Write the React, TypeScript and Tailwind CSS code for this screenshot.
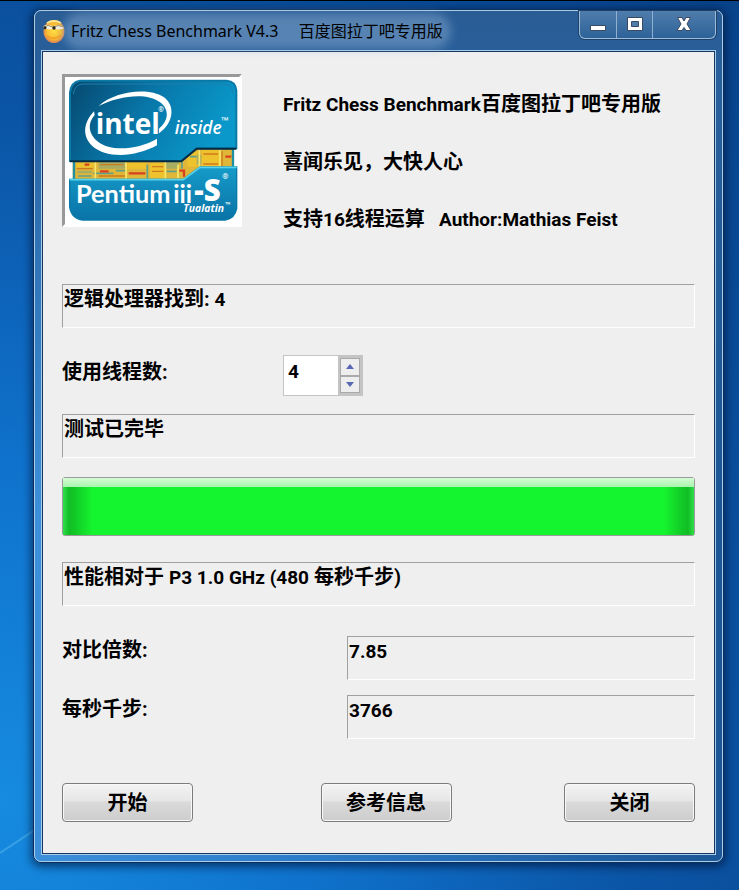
import { useState } from 'react';
import type { ReactNode } from 'react';

/** Fritz Chess Benchmark dialog on an Aero style desktop. */

const CAPTION_BUTTON =
  'flex h-full items-center justify-center border-r border-[#8fb0cf] last:border-r-0 hover:bg-white/20';

function SmileyIcon() {
  return (
    <svg viewBox="0 0 24 24" className="size-6 shrink-0" aria-hidden="true">
      <defs>
        <radialGradient id="face" cx="50%" cy="48%" r="55%">
          <stop offset="0" stopColor="#ffdf45" />
          <stop offset="0.65" stopColor="#f8b931" />
          <stop offset="1" stopColor="#d2795f" />
        </radialGradient>
      </defs>
      <ellipse cx="12" cy="12.500" rx="10.500" ry="11.500" fill="url(#face)" />
      <path d="M5 4Q12 0 19 4" stroke="#ffe98a" strokeWidth="2" fill="none" />
      <path d="M1.500 7Q6 4.500 11 7.500Q16 4.500 21.500 7.500V9.500Q16 11.500 12 9.500Q6 11.500 1.500 9z" fill="#f3efe0" />
      <path d="M1 8Q6 5 11 8Q16 5 22 8" fill="none" stroke="#8b713d" strokeWidth="0.800" />
      <circle cx="3" cy="8.800" r="1.500" fill="#222a22" />
      <circle cx="12" cy="9" r="1.700" fill="#222a22" />
      <path d="M5 17Q12 22 19 16" fill="none" stroke="#f29a25" strokeWidth="1.500" />
    </svg>
  );
}

function PentiumLogo() {
  return (
    <svg viewBox="45 37 522 441" className="block h-full w-full" role="img" aria-label="Intel inside Pentium iii-S Tualatin">
      <defs>
        <linearGradient id="top" x1="0" y1="0" x2="1" y2="0.3">
          <stop offset="0" stopColor="#06486f" />
          <stop offset="0.5" stopColor="#0876a8" />
          <stop offset="1" stopColor="#0a97c9" />
        </linearGradient>
        <linearGradient id="bottom" x1="0" y1="0" x2="0" y2="1">
          <stop offset="0" stopColor="#169bc9" />
          <stop offset="1" stopColor="#0973a6" />
        </linearGradient>
      </defs>

      {/* Processor die */}
      <path d="M68 250h482v95H68z" fill="#e0b638" />
      <path d="M80 296h52v12H80zM232 294h56v18h-56zM300 296h44v44h-44zM412 262h30v44h-30zM456 256h52v54h-52z" fill="#eec22c" />
      <path d="M146 292h80v20h-80zM348 292h38v20h-38zM82 318h44v8H82zM440 270h14v30h-14z" fill="#a9ad62" />
      <path d="M130 326h60M84 334h40M198 318h30M350 320h30M292 300v42M396 292v20M420 276h20" stroke="#5fa08c" strokeWidth="5" />
      <path d="M80 312h48M150 300h70M146 334h80M306 306h34M306 320h34M460 268h44M460 298h44M516 260v46" stroke="#cf7a1e" strokeWidth="4" />
      <path d="M136 290v52M228 290v52M346 290v52M448 256v50M510 256v52M384 300v40" stroke="#f7e86d" strokeWidth="5" />
      <path d="M236 326h50M526 276h18M388 318h14v18M150 320h26M104 300h14" stroke="#d8401f" strokeWidth="7" fill="none" />
      <path d="M72 290v55M549 250v60" stroke="#1f8fa6" strokeWidth="7" />

      <path
        d="M90 48H530Q557 50 559 78V251H440L394 289H60V84Q63 52 90 48z"
        fill="url(#top)"
        stroke="#0b79a6"
        strokeWidth="6"
      />
      <path d="M60 290H394L440 252H559" fill="none" stroke="#052b43" strokeWidth="6" />
      <path d="M70 88Q74 59 98 58H522Q546 60 548 84" fill="none" stroke="#1c80ad" strokeWidth="3" />
      <path
        d="M59 344H400L450 307H560V432Q554 462 526 466H98Q64 462 59 426z"
        fill="url(#bottom)"
        stroke="#0979a9"
        strokeWidth="4"
      />
      <path d="M59 345H400L450 308H560" fill="none" stroke="#58d3ea" strokeWidth="5" />

      {/* Swoosh around the wordmark */}
      <path
        d="M132 140C100 174 96 214 126 243C168 282 256 278 321 242V222C264 255 184 262 145 232C114 208 112 176 134 151z"
        fill="#fff"
      />
      <path
        d="M146 124C192 80 294 66 341 97C378 123 370 176 327 206V192C357 168 359 133 329 112C290 82 204 94 146 124z"
        fill="#fff"
      />
      <g fill="#fff">
        <text x="137" y="207" fontFamily="'Open Sans', sans-serif" fontSize="84" fontWeight="700">intel</text>
        <text x="325" y="143" fontFamily="'Open Sans', sans-serif" fontSize="20">®</text>
        <text x="374" y="208" fontFamily="'Open Sans', sans-serif" fontSize="52" fontStyle="italic" fontWeight="600">inside</text>
        <text x="514" y="177" fontFamily="'Open Sans', sans-serif" fontSize="28">™</text>
        <text x="78" y="415" fontFamily="Lato, sans-serif" fontSize="76" fontWeight="700">Pentium</text>
        <text x="370" y="415" fontFamily="Lato, sans-serif" fontSize="74" fontWeight="700">iii</text>
        <text x="433" y="409" fontFamily="'Open Sans', sans-serif" fontSize="88" fontWeight="800">-S</text>
        <text x="517" y="344" fontFamily="'Open Sans', sans-serif" fontSize="22">®</text>
        <text x="400" y="441" fontFamily="'Open Sans', sans-serif" fontSize="31" fontStyle="italic" fontWeight="700">Tualatin</text>
        <text x="526" y="428" fontFamily="'Open Sans', sans-serif" fontSize="20">™</text>
      </g>
    </svg>
  );
}

/** Latin runs are set one size down from the Chinese text around them. */
function Latin({ children }: { children: ReactNode }) {
  return <span className="text-[19px]">{children}</span>;
}

function Field({ children, id, className = '' }: { children: ReactNode; id?: string; className?: string }) {
  return (
    <output
      id={id}
      className={
        'block h-11 border border-b-white border-l-[#a0a0a0] border-r-white border-t-[#a0a0a0] px-px leading-7 ' +
        className
      }
    >
      {children}
    </output>
  );
}

function PushButton({
  children,
  onClick,
  className = '',
}: {
  children: ReactNode;
  onClick?: () => void;
  className?: string;
}) {
  return (
    <button
      type="button"
      onClick={onClick}
      className={
        'h-[39px] w-[131px] rounded-[4px] border border-[#7c7c7c] bg-[linear-gradient(to_bottom,#f3f3f3_0%,#e6e6e6_46%,#dadada_48%,#cdcdcd_100%)] font-bold shadow-[inset_0_0_0_1px_#f8f8f8] active:brightness-95 ' +
        className
      }
    >
      {children}
    </button>
  );
}

export default function App() {
  const [threads, setThreads] = useState(4);
  const [progress, setProgress] = useState(100);

  const step = (by: number) => setThreads((n) => Math.min(16, Math.max(1, n + by)));

  return (
    <main className="relative min-h-screen overflow-hidden border-t border-black bg-[radial-gradient(ellipse_at_0%_90%,#168be0_0%,#0f72cc_30%,#0b55a6_60%,#08438a_100%)] pt-2 pr-[15px] pb-[27px] pl-[33px]">
      {/* Wallpaper light ray */}
      <svg viewBox="0 0 36 26" className="absolute bottom-9 left-0 h-[26px] w-9" aria-hidden="true">
        <path d="M0 25L36 1" stroke="#4fb2ea" strokeWidth="2" opacity="0.6" />
      </svg>

      <section
        aria-labelledby="caption"
        className="relative rounded-lg border border-[#0b2f5e] bg-[linear-gradient(to_right,#3c8fda,#2c7cc9_40%,#1c5696)] shadow-[0_2px_9px_2px_rgba(0,15,50,0.6)]"
      >
        <div className="rounded-[7px] border border-[#a9cde8] bg-[linear-gradient(to_bottom,#2a5c94_0px,#28609c_60px,transparent_500px)] px-[6px] pb-[6px]">
          <header className="flex h-[39px] items-start justify-between">
            <div className="flex h-full items-center gap-[5px] pl-px">
              <SmileyIcon />
              <h1
                id="caption"
                className="rounded-full bg-[#8fb2d5]/45 font-['Noto_Sans','Noto_Sans_CJK_SC',sans-serif] text-base leading-5 whitespace-pre text-black shadow-[0_0_10px_8px_rgba(143,178,213,0.45)]"
              >
                Fritz Chess Benchmark V4.3{'   '}<span className="ml-2">百度图拉丁吧专用版</span>
              </h1>
            </div>
            <div className="flex h-[28px] rounded-b-md border border-t-0 border-[#9dbbd6] bg-linear-to-b from-[#4f7dac] to-[#2d6299] shadow-[0_0_0_1px_#1c426d]">
              <button type="button" aria-label="Minimize" className={CAPTION_BUTTON + ' w-[37px]'}>
                <svg viewBox="0 0 18 16" className="h-4 w-[18px]" aria-hidden="true">
                  <path d="M1.500 8.500h15v5h-15z" fill="#fff" stroke="#3a4a60" />
                </svg>
              </button>
              <button type="button" aria-label="Maximize" className={CAPTION_BUTTON + ' w-9'}>
                <svg viewBox="0 0 18 16" className="h-4 w-[18px]" aria-hidden="true">
                  <path d="M1.500 0.500h15v13h-15z" fill="#fff" stroke="#3a4a60" />
                  <path d="M5.500 4.500h7v5h-7z" fill="#4f7dac" stroke="#3a4a60" />
                </svg>
              </button>
              <button type="button" aria-label="Close" className={CAPTION_BUTTON + ' w-[62px]'}>
                <svg viewBox="0 0 18 16" className="h-4 w-[18px]" aria-hidden="true">
                  <path
                    d="M2.500 0.500H7L9 4l2-3.500h4.500L12 7l4 6.500h-5L9 10.500l-2 3H2L6 7z"
                    fill="#fff"
                    stroke="#3a4a60"
                  />
                </svg>
              </button>
            </div>
          </header>

          <div className="border border-[#a9cde8]">
            <div className="border border-[#16365f] bg-[#efefef] px-[19px] pt-[22px] pb-[31px] font-['Roboto','Noto_Sans_CJK_SC',sans-serif] text-xl leading-7 font-bold text-black">
              <div className="flex items-start gap-[41px]">
                <div className="h-[153px] w-[180px] shrink-0 border-[3px] border-t-[#999] border-r-white border-b-white border-l-[#999] bg-white">
                  <PentiumLogo />
                </div>
                <div className="flex flex-col gap-[29px] pt-4 whitespace-pre">
                  <p><Latin>Fritz Chess Benchmark</Latin>百度图拉丁吧专用版</p>
                  <p>喜闻乐见，大快人心</p>
                  <p>支持<Latin>16</Latin>线程运算<Latin>{'   '}Author:Mathias Feist</Latin></p>
                </div>
              </div>

              <Field className="mt-[50px]">逻辑处理器找到: <Latin>4</Latin></Field>

              <div className="mt-[27px] flex h-[41px] items-center">
                <label htmlFor="threads" className="w-[221px] pb-2">使用线程数:</label>
                <div className="flex h-[41px] w-20 border border-[#c4c4c4] bg-white">
                  <input
                    id="threads"
                    type="text"
                    inputMode="numeric"
                    value={threads}
                    onChange={(e) => setThreads(Number(e.target.value) || 1)}
                    className="min-w-0 flex-1 bg-transparent pb-2 pl-1 text-[19px] outline-none"
                  />
                  <div className="flex w-6 flex-col border-2 border-[#c4c4c4] bg-[#aaa]">
                    <button
                      type="button"
                      aria-label="More threads"
                      onClick={() => step(1)}
                      className="flex flex-1 items-center justify-center border border-[#aaa] bg-[#eee]"
                    >
                      <svg viewBox="0 0 8 5" className="h-[5px] w-2" aria-hidden="true">
                        <path d="M4 0l4 5H0z" fill="#5968b2" />
                      </svg>
                    </button>
                    <button
                      type="button"
                      aria-label="Fewer threads"
                      onClick={() => step(-1)}
                      className="flex flex-1 items-center justify-center border border-[#aaa] bg-[#eee]"
                    >
                      <svg viewBox="0 0 8 5" className="h-[5px] w-2" aria-hidden="true">
                        <path d="M4 5l4-5H0z" fill="#5968b2" />
                      </svg>
                    </button>
                  </div>
                </div>
              </div>

              <Field className="mt-[18px]">测试已完毕</Field>

              <div
                role="progressbar"
                aria-valuenow={progress}
                aria-label="测试已完毕"
                className="mt-[19px] h-[59px] rounded-[3px] border border-[#9a9a9a] bg-[#ddd]"
              >
                <div
                  className="h-full bg-[linear-gradient(to_bottom,#d4fbd4_0px,#a8f5ad_9px,transparent_9px),linear-gradient(to_right,#2fe04a_0px,#12bd25_6px,#12c927_12px,#15f52f_30px,#15f52f_calc(100%-30px),#12c927_calc(100%-12px),#12bd25_calc(100%-6px),#2fe04a_100%)]"
                  style={{ width: `${progress}%` }}
                />
              </div>

              <Field className="mt-[26px]">性能相对于 <Latin>P3 1.0 GHz (480</Latin> 每秒千步)</Field>

              <div className="mt-[30px] flex">
                <label htmlFor="ratio" className="w-[285px] shrink-0">对比倍数:</label>
                <Field id="ratio" className="flex-1"><Latin>7.85</Latin></Field>
              </div>
              <div className="mt-[15px] flex">
                <label htmlFor="nodes" className="w-[285px] shrink-0">每秒千步:</label>
                <Field id="nodes" className="flex-1"><Latin>3766</Latin></Field>
              </div>

              <div className="mt-11 flex justify-between">
                <PushButton onClick={() => setProgress(100)}>开始</PushButton>
                <PushButton className="ml-[15px]">参考信息</PushButton>
                <PushButton>关闭</PushButton>
              </div>
            </div>
          </div>
        </div>
      </section>
    </main>
  );
}
